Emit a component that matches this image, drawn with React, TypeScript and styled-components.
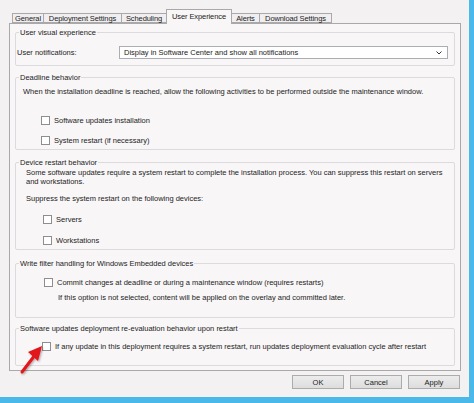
import React from 'react';
import styled, { createGlobalStyle } from 'styled-components';

const GlobalStyle = createGlobalStyle`
  html, body {
    margin: 0;
    padding: 0;
    background: #f4f1f3;
  }
  * {
    box-sizing: border-box;
  }
`;

const Screen = styled.div`
  position: relative;
  width: 474px;
  height: 403px;
  background: #f4f1f3;
  border-right: 5px solid #4ab9ea;
  border-bottom: 6px solid #4ab9ea;
  font-family: Tahoma, 'Liberation Sans', Arial, sans-serif;
  font-size: 7.5px;
  line-height: 9px;
  color: #1c1c1c;
  overflow: hidden;
`;

const Dialog = styled.div`
  display: flex;
  flex-direction: column;
  padding: 8px 0 0 9px;
  width: 452px;
  box-sizing: content-box;
`;

const TabStrip = styled.div`
  display: flex;
  align-items: flex-end;
  padding-left: 3px;
  height: 15px;
  position: relative;
  z-index: 1;
`;

const Tab = styled.div<{ $active?: boolean; $w: number }>`
  width: ${p => p.$w}px;
  height: ${p => (p.$active ? 15 : 10)}px;
  margin-bottom: ${p => (p.$active ? -1 : 0)}px;
  padding-top: ${p => (p.$active ? 2 : 0)}px;
  display: flex;
  justify-content: center;
  border: 1px solid #a9a9a9;
  border-bottom: ${p => (p.$active ? 'none' : '1px solid #a9a9a9')};
  margin-left: -1px;
  background: ${p => (p.$active ? '#f8f6f7' : '#f0eef0')};
  white-space: nowrap;
  letter-spacing: -0.1px;
  &:first-child {
    margin-left: 0;
  }
`;

const Panel = styled.div`
  display: flex;
  flex-direction: column;
  height: 348px;
  border: 1px solid #a9a9a9;
  background: #f8f6f7;
  padding: 0 5px;
`;

const Group = styled.fieldset<{ $mt: number; $h: number }>`
  margin: ${p => p.$mt}px 0 0 0;
  height: ${p => p.$h}px;
  min-inline-size: 0;
  padding: 0;
  border: 1px solid #dcdadc;
  border-radius: 2px;
  display: flex;
  flex-direction: column;
`;

const Legend = styled.legend`
  margin-left: 3px;
  padding: 0 1px;
  line-height: 9px;
  white-space: nowrap;
`;

const Row = styled.div<{ $mt: number; $indent: number }>`
  display: flex;
  align-items: center;
  height: 9px;
  margin-top: ${p => p.$mt}px;
  padding-left: ${p => p.$indent}px;
  white-space: nowrap;
`;

const Text = styled.div<{ $mt: number; $indent: number }>`
  margin-top: ${p => p.$mt}px;
  padding: 0 2px 0 ${p => p.$indent}px;
  line-height: 9px;
`;

const SelectRow = styled.div`
  display: flex;
  align-items: center;
  margin-top: 9px;
  padding-left: 1px;
  height: 13px;
`;

const FieldLabel = styled.div`
  width: 102px;
`;

const Select = styled.div`
  display: flex;
  align-items: center;
  justify-content: space-between;
  width: 329px;
  height: 13px;
  padding: 0 5px 0 4px;
  background: #ffffff;
  border: 1px solid #abadb3;
`;

const Box = styled.span`
  display: inline-block;
  width: 9px;
  height: 9px;
  background: #ffffff;
  border: 1px solid #8e8e8e;
  margin-right: 4px;
  flex: none;
`;

const ButtonBar = styled.div`
  display: flex;
  justify-content: flex-end;
  gap: 6px;
  margin-top: 4px;
  padding-right: 1px;
`;

const Button = styled.div`
  width: 52px;
  height: 14px;
  display: flex;
  align-items: center;
  justify-content: center;
  border: 1px solid #acacac;
  background: linear-gradient(#ececec, #dddddd);
`;

const Arrow = styled.svg`
  position: absolute;
  left: 18px;
  top: 342px;
  width: 30px;
  height: 34px;
  overflow: visible;
`;

const Check = ({ label }: { label: string }) => (
  <>
    <Box />
    <span>{label}</span>
  </>
);

export default function App() {
  return (
    <>
      <GlobalStyle />
      <Screen>
        <Dialog>
          <TabStrip>
            <Tab $w={32}>General</Tab>
            <Tab $w={79}>Deployment Settings</Tab>
            <Tab $w={46}>Scheduling</Tab>
            <Tab $w={66} $active>User Experience</Tab>
            <Tab $w={29}>Alerts</Tab>
            <Tab $w={73}>Download Settings</Tab>
          </TabStrip>
          <Panel>
            <Group $mt={4} $h={38}>
              <Legend>User visual experience</Legend>
              <SelectRow>
                <FieldLabel>User notifications:</FieldLabel>
                <Select>
                  <span>Display in Software Center and show all notifications</span>
                  <svg width="6" height="4" viewBox="0 0 6 4">
                    <path d="M0.5 0.5 L3 3 L5.5 0.5" fill="none" stroke="#333" strokeWidth="1" />
                  </svg>
                </Select>
              </SelectRow>
            </Group>

            <Group $mt={7} $h={77}>
              <Legend>Deadline behavior</Legend>
              <Text $mt={5} $indent={7}>
                When the installation deadline is reached, allow the following activities to be performed outside the maintenance window.
              </Text>
              <Row $mt={20} $indent={25}>
                <Check label="Software updates installation" />
              </Row>
              <Row $mt={11} $indent={25}>
                <Check label="System restart (if necessary)" />
              </Row>
            </Group>

            <Group $mt={8} $h={92}>
              <Legend>Device restart behavior</Legend>
              <Text $mt={1} $indent={10}>
                Some software updates require a system restart to complete the installation process. You can suppress this restart on servers and workstations.
              </Text>
              <Text $mt={8} $indent={10}>
                Suppress the system restart on the following devices:
              </Text>
              <Row $mt={12} $indent={27}>
                <Check label="Servers" />
              </Row>
              <Row $mt={12} $indent={27}>
                <Check label="Workstations" />
              </Row>
            </Group>

            <Group $mt={9} $h={59}>
              <Legend>Write filter handling for Windows Embedded devices</Legend>
              <Row $mt={10} $indent={28}>
                <Check label="Commit changes at deadline or during a maintenance window (requires restarts)" />
              </Row>
              <Text $mt={6} $indent={42}>
                If this option is not selected, content will be applied on the overlay and committed later.
              </Text>
            </Group>

            <Group $mt={6} $h={42}>
              <Legend>Software updates deployment re-evaluation behavior upon restart</Legend>
              <Row $mt={9} $indent={26}>
                <Check label="If any update in this deployment requires a system restart, run updates deployment evaluation cycle after restart" />
              </Row>
            </Group>
          </Panel>
          <ButtonBar>
            <Button>OK</Button>
            <Button>Cancel</Button>
            <Button>Apply</Button>
          </ButtonBar>
        </Dialog>

        <Arrow viewBox="0 0 30 34">
          <defs>
            <filter id="sh" x="-50%" y="-50%" width="200%" height="200%">
              <feDropShadow dx="1" dy="1" stdDeviation="1" floodColor="#000" floodOpacity="0.35" />
            </filter>
          </defs>
          <g filter="url(#sh)">
            <path d="M4 30 L17 13" stroke="#e3161b" strokeWidth="3" strokeLinecap="round" />
            <path d="M24 4 L10 10 L20 19 Z" fill="#e3161b" />
          </g>
        </Arrow>
      </Screen>
    </>
  );
}
